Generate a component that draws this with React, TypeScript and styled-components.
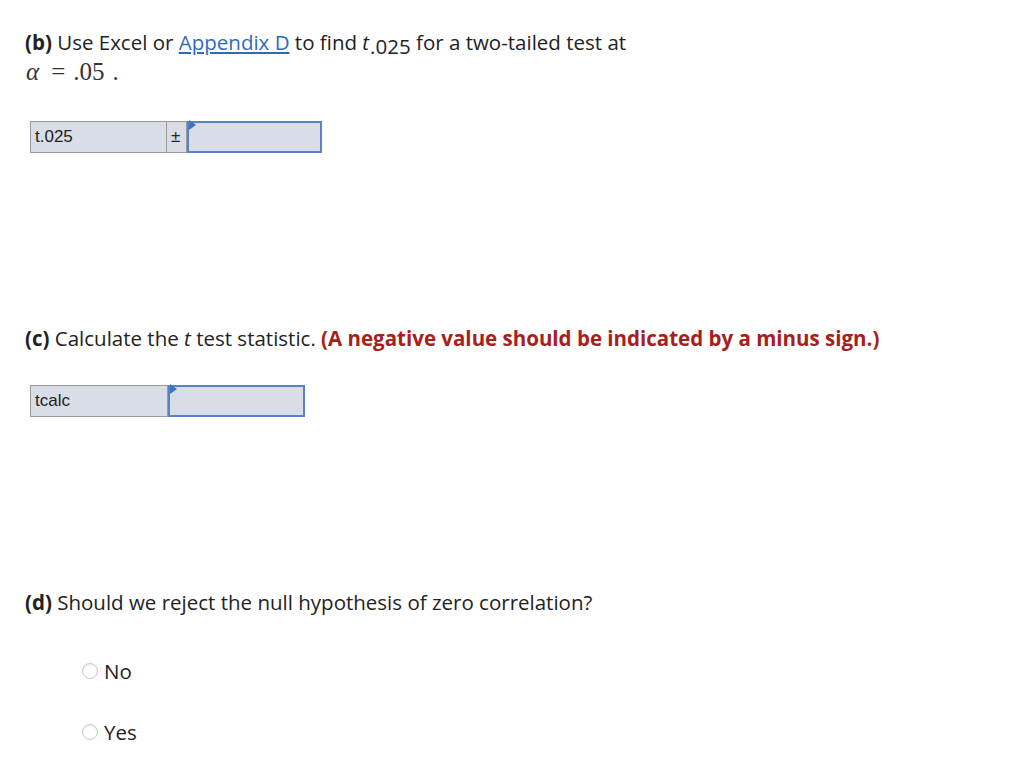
import styled, { createGlobalStyle } from "styled-components";

const GlobalStyle = createGlobalStyle`
  body {
    margin: 0;
    background: #fff;
    font-family: "Open Sans", Lato, sans-serif;
    color: #222;
  }
`;

const Page = styled.div`
  padding: 29px 25px 0 25px;
`;

const Section = styled.div<{ $gap: number }>`
  margin-bottom: ${(p) => p.$gap}px;
`;

const Prompt = styled.div`
  font-size: 20.5px;
  line-height: 26px;
  white-space: nowrap;
`;

const Part = styled.b`
  font-weight: 700;
`;

const Link = styled.a`
  color: #2f6bbd;
  text-decoration: underline;
`;

const Italic = styled.i`
  font-style: italic;
`;

const Sub = styled.span`
  position: relative;
  top: 4px;
  margin-left: 1px;
`;

const MathLine = styled.p`
  margin: 0;
  height: 33px;
  display: flex;
  align-items: center;
`;

const MathText = styled.span<{ $italic?: boolean; $ml: number }>`
  font-family: "Liberation Serif", "Times New Roman", Times, serif;
  font-size: 25px;
  font-style: ${(p) => (p.$italic ? "italic" : "normal")};
  margin-left: ${(p) => p.$ml}px;
  color: #333;
`;

const Warn = styled.b`
  color: #a8201a;
  font-weight: 700;
`;

const Table = styled.div`
  display: flex;
  margin-left: 5px;
  border: 1px solid #9a9a9a;
  width: max-content;
  height: 30px;
  background: #d9dde6;
  font-family: "Liberation Sans", Arial, sans-serif;
  font-size: 17px;
  color: #222;
`;

const Cell = styled.div<{ $w: number }>`
  width: ${(p) => p.$w}px;
  display: flex;
  align-items: center;
  padding-left: 4px;
  box-sizing: border-box;
  border-right: 1px solid #9a9a9a;
`;

const Input = styled.div<{ $w: number }>`
  position: relative;
  width: ${(p) => p.$w}px;
  box-sizing: border-box;
  border: 2px solid #5a82c6;
  margin: -1px -1px -1px 0;
  height: 32px;
  &::before {
    content: "";
    position: absolute;
    left: 0;
    top: 0;
    border-top: 5px solid transparent;
    border-bottom: 5px solid transparent;
    border-left: 7px solid #3f73c4;
    transform: translateY(-3px);
  }
`;

const Options = styled.div`
  padding-left: 57px;
  display: flex;
  flex-direction: column;
  gap: 35px;
  margin-top: 43px;
`;

const Option = styled.label`
  display: flex;
  align-items: center;
  gap: 6px;
  font-size: 20.5px;
  line-height: 26px;
`;

const Radio = styled.span`
  width: 14px;
  height: 14px;
  border-radius: 50%;
  border: 1px solid #c8c8c8;
  background: #fff;
  box-shadow: inset 0 1px 2px rgba(0, 0, 0, 0.08);
`;

export default function App() {
  return (
    <Page>
      <GlobalStyle />
      <Section $gap={33}>
        <Prompt>
          <Part>(b)</Part> Use Excel or <Link href="#">Appendix D</Link> to find{" "}
          <Italic>t</Italic>
          <Sub>.025</Sub> for a two-tailed test at
        </Prompt>
        <MathLine>
          <MathText $italic $ml={1}>
            α
          </MathText>
          <MathText $ml={12}>=</MathText>
          <MathText $ml={8}>.05</MathText>
          <MathText $ml={8}>.</MathText>
        </MathLine>
      </Section>
      <Section $gap={172}>
        <Table>
          <Cell $w={136}>t.025</Cell>
          <Cell $w={20}>±</Cell>
          <Input $w={135} />
        </Table>
      </Section>
      <Section $gap={34}>
        <Prompt>
          <Part>(c)</Part> Calculate the <Italic>t</Italic> test statistic.{" "}
          <Warn>(A negative value should be indicated by a minus sign.)</Warn>
        </Prompt>
      </Section>
      <Section $gap={172}>
        <Table>
          <Cell $w={137}>tcalc</Cell>
          <Input $w={137} />
        </Table>
      </Section>
      <Section $gap={0}>
        <Prompt>
          <Part>(d)</Part> Should we reject the null hypothesis of zero correlation?
        </Prompt>
        <Options>
          <Option>
            <Radio />
            No
          </Option>
          <Option>
            <Radio />
            Yes
          </Option>
        </Options>
      </Section>
    </Page>
  );
}
